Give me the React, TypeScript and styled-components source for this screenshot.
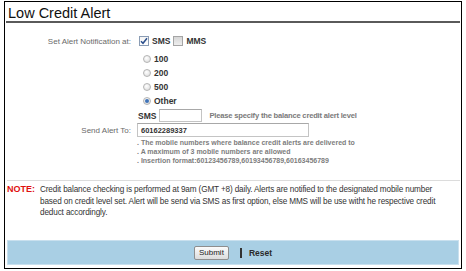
import React from "react";
import styled, {createGlobalStyle} from "styled-components";

const GlobalStyle = createGlobalStyle`
  html, body {
    margin: 0;
    padding: 0;
    background: #fff;
  }
  body {
    font-family: "Liberation Sans", Arial, sans-serif;
  }
`

const Panel = styled.div`
  box-sizing: border-box;
  width: 458px;
  height: 268px;
  margin: 1px 0 0 4px;
  border: 1px solid #000;
  display: flex;
  flex-direction: column;
`

const Title = styled.h1`
  margin: 0 1px;
  padding: 3px 0 0 2px;
  height: 16px;
  font-size: 14.5px;
  line-height: 16px;
  font-weight: normal;
  color: #111;
  border-bottom: 2px solid #5a5a5a;
`

const Form = styled.div`
  display: grid;
  grid-template-columns: 126px 1fr;
  column-gap: 6px;
  margin-top: 11px;
`

const Label = styled.div<{ h?: number }>`
  height: ${p => p.h || 14}px;
  display: flex;
  align-items: center;
  justify-content: flex-end;
  font-size: 8px;
  color: #6a6a6a;
`

const Field = styled.div<{ h?: number }>`
  height: ${p => p.h || 14}px;
  display: flex;
  align-items: center;
  font-size: 8px;
  color: #333;
`

const Stack = styled.div<{ mt?: number }>`
  display: flex;
  flex-direction: column;
  margin-top: ${p => p.mt || 0}px;
`

const Box = styled.span<{ checked?: boolean, ml?: number }>`
  box-sizing: border-box;
  width: 10px;
  height: 10px;
  margin: 0 3px 0 ${p => p.ml ?? 2}px;
  border: 1px solid ${p => p.checked ? '#8a9cb4' : '#a5a5a5'};
  background: ${p => p.checked ? 'linear-gradient(#f4f4f4, #ffffff)' : 'linear-gradient(#d6d6d6, #eeeeee)'};
  display: inline-flex;
  align-items: center;
  justify-content: center;
`

const Radio = styled.span<{ checked?: boolean }>`
  box-sizing: border-box;
  width: 8px;
  height: 8px;
  margin: 0 3px 0 6px;
  border-radius: 50%;
  border: 1px solid #b4b4b4;
  background: radial-gradient(circle at 40% 35%, #ffffff, #d8d8d8);
  display: inline-flex;
  align-items: center;
  justify-content: center;

  &::after {
    content: "";
    display: ${p => p.checked ? 'block' : 'none'};
    width: 4px;
    height: 4px;
    border-radius: 50%;
    background: #3f73b8;
  }
`

const Opt = styled.span<{ ml?: number }>`
  font-size: 8.5px;
  font-weight: bold;
  color: #333;
  margin: 0 3px 0 ${p => p.ml || 0}px;
`

const TextBox = styled.div<{ w: number, h: number }>`
  box-sizing: border-box;
  width: ${p => p.w}px;
  height: ${p => p.h}px;
  border: 1px solid #c4c4c4;
  border-top-color: #a8a8a8;
  background: #fff;
  display: flex;
  align-items: center;
  padding-left: 3px;
  font-size: 7.5px;
  font-weight: bold;
  color: #333;
`

const Hint = styled.span`
  margin-left: 7px;
  font-size: 7.6px;
  font-weight: bold;
  letter-spacing: -0.2px;
  color: #7a7a7a;
`

const HelpLine = styled.div`
  height: 9px;
  line-height: 9px;
  font-size: 7px;
  font-weight: bold;
  color: #7d7d7d;
`

const Separator = styled.div`
  height: 1px;
  margin: 15px 1px 0 2px;
  background: #dcdcdc;
`

const Note = styled.div`
  display: flex;
  margin-top: 3px;
  padding-left: 2px;
  line-height: 11.5px;
  color: #333;
`

const NoteTag = styled.span`
  width: 33px;
  flex-shrink: 0;
  font-size: 9px;
  font-weight: bold;
  color: #e01010;
`

const NoteText = styled.p`
  margin: 0;
  width: 412px;
  font-size: 8.2px;
  letter-spacing: -0.14px;
`

const Footer = styled.div`
  margin: auto 2px 3px 2px;
  height: 25px;
  background: #a9cfe4;
  border: 1px solid #c9e0ee;
  box-sizing: border-box;
  display: flex;
  align-items: center;
  justify-content: center;
`

const Button = styled.button`
  box-sizing: border-box;
  width: 35px;
  height: 14px;
  padding: 0;
  border: 1px solid #8e8e8e;
  border-radius: 2px;
  background: linear-gradient(#fbfbfb, #dcdcdc);
  font-family: "Liberation Sans", Arial, sans-serif;
  font-size: 8px;
  color: #222;
`

const Pipe = styled.span`
  width: 2px;
  height: 10px;
  background: #333;
  margin: 0 7px 0 11px;
`

const ResetLink = styled.span`
  font-size: 8.5px;
  font-weight: bold;
  color: #2a2a2a;
`

const Check = () => (
    <svg width="8" height="8" viewBox="0 0 8 8">
        <path d="M1 4.2 L3 6.3 L7 1.2" fill="none" stroke="#2b4f8c" strokeWidth="1.5"/>
    </svg>
)

const levels = ['100', '200', '500']

const App = () => {
    return (
        <>
            <GlobalStyle/>
            <Panel>
                <Title>Low Credit Alert</Title>
                <Form>
                    <Label>Set Alert Notification at:</Label>
                    <Field>
                        <Box checked><Check/></Box>
                        <Opt>SMS</Opt>
                        <Box ml={0}/>
                        <Opt>MMS</Opt>
                    </Field>

                    <div/>
                    <Stack mt={4}>
                        {levels.map(l => (
                            <Field key={l}>
                                <Radio/>
                                <Opt>{l}</Opt>
                            </Field>
                        ))}
                        <Field>
                            <Radio checked/>
                            <Opt>Other</Opt>
                        </Field>
                        <Field h={15}>
                            <Opt ml={1}>SMS</Opt>
                            <TextBox w={43} h={13}/>
                            <Hint>Please specify the balance credit alert level</Hint>
                        </Field>
                    </Stack>

                    <Label>Send Alert To:</Label>
                    <Field>
                        <TextBox w={172} h={14}>60162289337</TextBox>
                    </Field>

                    <div/>
                    <Stack mt={1}>
                        <HelpLine>. The mobile numbers where balance credit alerts are delivered to</HelpLine>
                        <HelpLine>. A maximum of 3 mobile numbers are allowed</HelpLine>
                        <HelpLine>. Insertion format:60123456789,60193456789,60163456789</HelpLine>
                    </Stack>
                </Form>

                <Separator/>

                <Note>
                    <NoteTag>NOTE:</NoteTag>
                    <NoteText>
                        Credit balance checking is performed at 9am (GMT +8) daily. Alerts are notified to the
                        designated mobile number based on credit level set. Alert will be send via SMS as first
                        option, else MMS will be use witht he respective credit deduct accordingly.
                    </NoteText>
                </Note>

                <Footer>
                    <Button>Submit</Button>
                    <Pipe/>
                    <ResetLink>Reset</ResetLink>
                </Footer>
            </Panel>
        </>
    )
}

export default App
